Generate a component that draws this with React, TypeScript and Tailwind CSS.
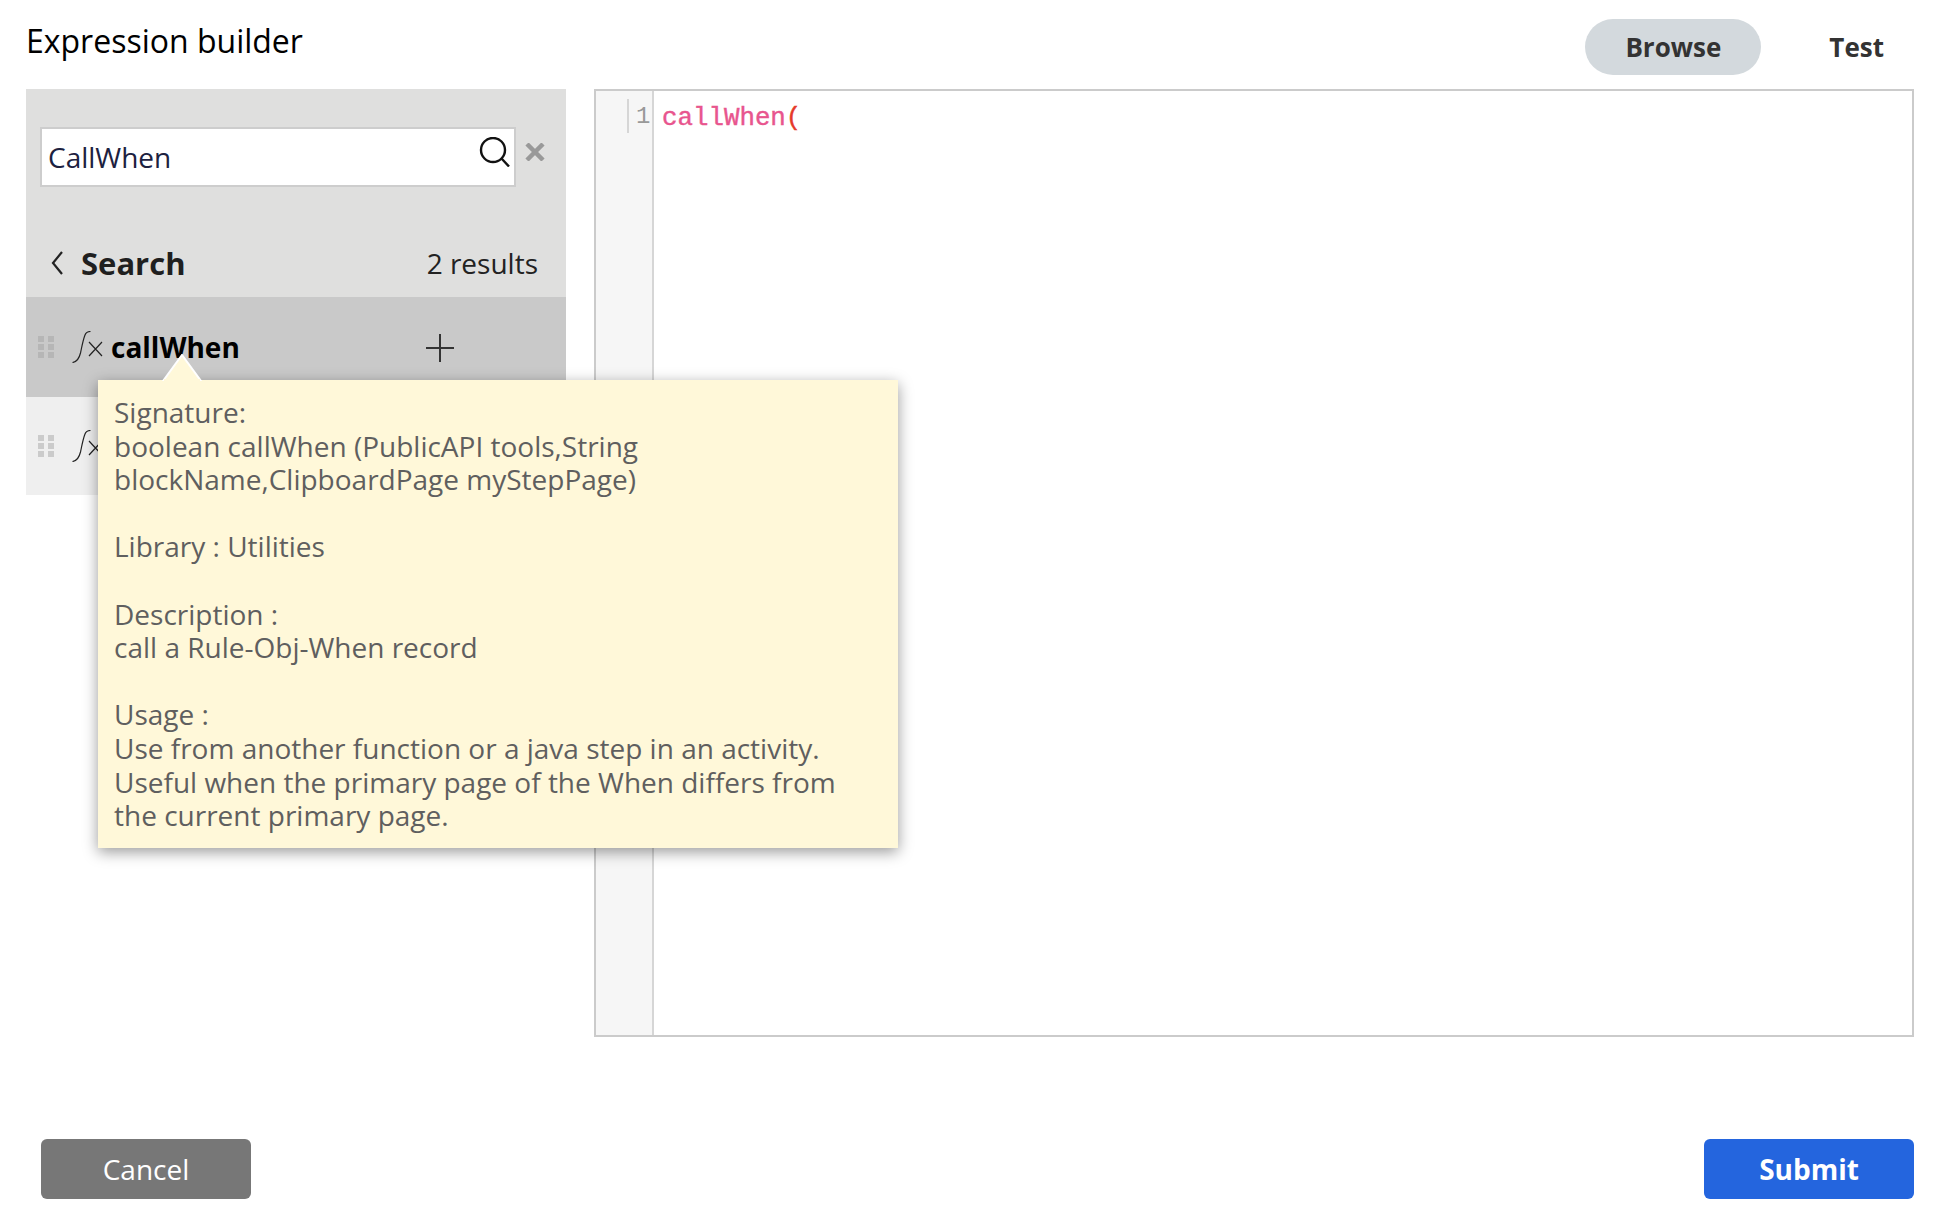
const FONT = "font-['Open_Sans',sans-serif]";

const tooltipLines = [
  'Signature:',
  'boolean callWhen (PublicAPI tools,String',
  'blockName,ClipboardPage myStepPage)',
  '',
  'Library : Utilities',
  '',
  'Description :',
  'call a Rule-Obj-When record',
  '',
  'Usage :',
  'Use from another function or a java step in an activity.',
  'Useful when the primary page of the When differs from',
  'the current primary page.',
];

const DragHandle = ({ color }: { color: string }) => (
  <svg width="16" height="22" viewBox="0 0 16 22" className="shrink-0" fill={color}>
    <rect x="0" y="0" width="6" height="6" />
    <rect x="10" y="0" width="6" height="6" />
    <rect x="0" y="8" width="6" height="6" />
    <rect x="10" y="8" width="6" height="6" />
    <rect x="0" y="16" width="6" height="6" />
    <rect x="10" y="16" width="6" height="6" />
  </svg>
);

const FxIcon = () => (
  <svg width="31" height="32" viewBox="0 0 31 32" fill="none" stroke="#222" strokeWidth="1.2" className="shrink-0">
    <path d="M0.5 31.5 C5 31 7 28 8.5 22 C10 15 11 9 13 4 C14 1.5 16 0.5 18.5 0.5" />
    <path d="M17 11 L30 25 M30 11 L17 25" />
  </svg>
);

const ResultRow = ({
  className,
  handle,
  name,
  plus,
}: {
  className: string;
  handle: string;
  name?: string;
  plus?: boolean;
}) => (
  <div className={`flex items-center pl-3 ${className}`}>
    <DragHandle color={handle} />
    <div className="ml-[18px] flex items-center">
      <FxIcon />
    </div>
    <span className="ml-[8px] w-[315px] text-[28px] font-bold leading-none text-black">{name}</span>
    {plus && (
      <svg width="28" height="28" viewBox="0 0 28 28" stroke="#333" strokeWidth="2" className="mt-[1px] shrink-0">
        <path d="M14 0 V28 M0 14 H28" />
      </svg>
    )}
  </div>
);

export default function App() {
  return (
    <div className={`relative h-[1222px] w-[1936px] overflow-hidden bg-white ${FONT}`}>
      <header className="flex h-[89px] items-start justify-between pl-[26px] pr-[52px]">
        <h1 className="mt-[19px] text-[32px] leading-[44px] text-black">Expression builder</h1>
        <div className="mt-[19px] flex items-center">
          <div className="flex h-[56px] w-[176px] items-center justify-center rounded-full bg-[#d3d9dd] text-[26px] font-bold text-[#333]">
            Browse
          </div>
          <div className="ml-[68px] text-[26px] font-bold text-[#333]">Test</div>
        </div>
      </header>

      <main className="flex pl-[26px] pr-[22px]">
        <aside className="w-[540px] shrink-0">
          <div className="h-[208px] bg-[#dfdfde]">
            <div className="flex items-start pl-[14px] pt-[38px]">
              <div className="flex h-[60px] w-[476px] items-center justify-between border-2 border-[#cdcdcd] bg-white pl-[6px] pr-[4px]">
                <span className="text-[28px] leading-none text-[#1c2140]">CallWhen</span>
                <svg width="31" height="30" viewBox="0 0 31 30" fill="none" stroke="#111" strokeWidth="2.4" className="mb-[10px]">
                  <circle cx="14" cy="13" r="12" />
                  <path d="M22.5 21.5 L30 29.5" />
                </svg>
              </div>
              <svg width="20" height="18" viewBox="0 0 20 18" stroke="#999" strokeWidth="4.5" className="ml-[9px] mt-[16px]">
                <path d="M2 1 L18 17 M18 1 L2 17" />
              </svg>
            </div>
            <div className="mt-[56px] flex items-center justify-between pl-[25px] pr-[28px]">
              <div className="flex items-center">
                <svg width="12" height="24" viewBox="0 0 12 24" fill="none" stroke="#222" strokeWidth="2.2">
                  <path d="M11 1 L2 12 L11 23" />
                </svg>
                <span className="ml-[18px] text-[31px] font-bold leading-[40px] text-[#1f1f1f]">Search</span>
              </div>
              <span className="text-[28px] leading-[39px] text-[#222]">2 results</span>
            </div>
          </div>
          <ResultRow className="h-[100px] bg-[#c9c9c9]" handle="#b6b6b6" name="callWhen" plus />
          <ResultRow className="h-[98px] bg-[#efefef]" handle="#cbcbcb" />
        </aside>

        <section className="ml-[28px] flex h-[948px] flex-1 border-2 border-[#cbcbcb] bg-white">
          <div className="relative w-[58px] shrink-0 border-r-2 border-[#d6d6d6] bg-[#f6f6f6]">
            <div className="ml-[31px] mt-[8px] flex h-[34px] items-center border-l-2 border-[#d6d6d6] pl-[7px] pt-[2px] font-['Liberation_Mono',monospace] text-[24px] text-[#999]">
              1
            </div>
          </div>
          <div className="pl-[8px] pt-[11px] font-['Liberation_Mono',monospace] text-[25.8px] font-medium leading-[34px] text-[#e8558e] [-webkit-text-stroke:0.4px_#e8558e]">
            callWhen<span className="text-[#e63a2a] [-webkit-text-stroke:0.4px_#e63a2a]">(</span>
          </div>
        </section>
      </main>

      <footer className="mt-[102px] flex justify-between pl-[41px] pr-[22px]">
        <button className="flex h-[60px] w-[210px] items-center justify-center rounded-[6px] bg-[#777] text-[28px] text-white">
          Cancel
        </button>
        <button className="flex h-[60px] w-[210px] items-center justify-center rounded-[6px] bg-[#2465de] text-[28px] font-bold text-white">
          Submit
        </button>
      </footer>

      {/* tooltip sits over the list and the editor */}
      <div className="absolute left-[98px] top-[380px] h-[468px] w-[800px] bg-[#fff8d9] pl-[16px] pr-[16px] pt-[16px] text-[28px] leading-[33px] text-[#5f5f5f] shadow-[0_4px_14px_rgba(0,0,0,0.4)]">
        <svg width="42" height="27" viewBox="0 0 42 27" className="absolute left-[63px] top-[-26px]">
          <path d="M2 27 L21 1 L40 27 Z" fill="#fff8d9" stroke="#fff" strokeWidth="2" />
          <rect x="3" y="25" width="36" height="2" fill="#fff8d9" />
        </svg>
        <div className="flex flex-col gap-[0.62px]">
          {tooltipLines.map((line, i) => (
            <div key={i} className="h-[33px] whitespace-nowrap">
              {line}
            </div>
          ))}
        </div>
      </div>
    </div>
  );
}
